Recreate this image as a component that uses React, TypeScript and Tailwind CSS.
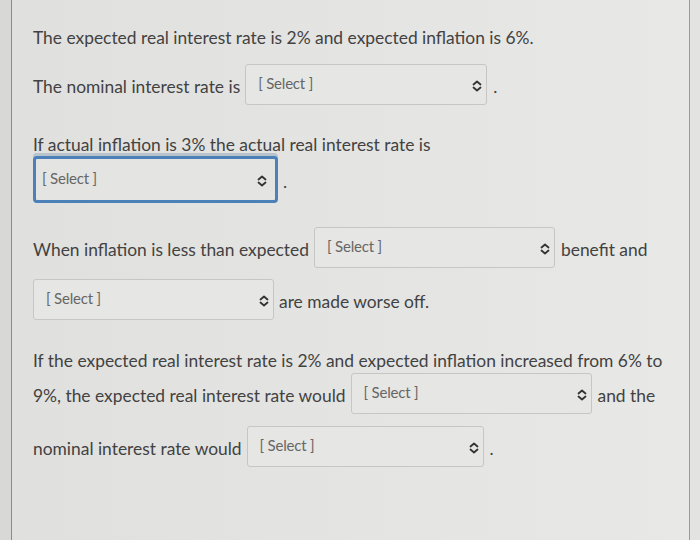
import React from "react";

function Chevron() {
  return (
    <svg width="10" height="12" viewBox="0 0 10 12" fill="none" stroke="#333333" strokeWidth="1.8" strokeLinecap="round" strokeLinejoin="round">
      <polyline points="1.5,4.5 5,1.5 8.5,4.5" />
      <polyline points="1.5,7.5 5,10.5 8.5,7.5" />
    </svg>
  );
}

function Select({ w, focused = false }: { w: string; focused?: boolean }) {
  return (
    <div
      className={
        focused
          ? `${w} h-[47px] shrink-0 rounded-[4px] border-[3px] border-[#4c80b8] bg-[#e4e4e2] flex items-center justify-between pl-[6px] pr-[8px] shadow-[0_-3px_0_0_#b9c3cc]`
          : `${w} h-[41px] shrink-0 rounded-[3px] border border-[#c6c6c4] bg-[#e6e6e4] flex items-center justify-between pl-[12px] pr-[4px]`
      }
    >
      <span className="text-[15px] text-[#666666] -mt-[3px] tracking-[-0.2px]">[ Select ]</span>
      <span className="mt-[3px]"><Chevron /></span>
    </div>
  );
}

export default function App() {
  return (
    <div className="w-[700px] h-[540px] flex bg-[#e3e3e1] font-['Lato',sans-serif] text-[17.4px] text-[#424242] overflow-hidden">
      <div className="w-[12px] h-full bg-[#d8d8d6] border-r border-[#8a8a88]" />
      <div className="w-[678px] h-full border-r border-[#9a9a98] bg-gradient-to-r from-[#e0e0de] to-[#e8e8e6] pl-[21px] flex flex-col">
        <div className="h-[20px]" />
        <div className="h-[36px] flex items-center">The expected real interest rate is 2% and expected inflation is 6%.</div>
        <div className="h-[8px]" />
        <div className="h-[41px] flex items-center">
          <span className="pt-[6px] mr-[5px]">The nominal interest rate is</span>
          <Select w="w-[242px]" />
          <span className="pt-[6px] ml-[6px]">.</span>
        </div>
        <div className="h-[29px]" />
        <div className="h-[22px] flex items-center">
          If actual inflation is 3% the actual real interest rate is
        </div>
        <div className="h-[0px]" />
        <div className="h-[47px] flex items-center">
          <Select w="w-[245px]" focused />
          <span className="pt-[6px] ml-[5px]">.</span>
        </div>
        <div className="h-[24px]" />
        <div className="h-[41px] flex items-center">
          <span className="pt-[6px] mr-[5px]">When inflation is less than expected</span>
          <Select w="w-[241px]" />
          <span className="pt-[6px] ml-[6px]">benefit and</span>
        </div>
        <div className="h-[11px]" />
        <div className="h-[41px] flex items-center">
          <Select w="w-[241px]" />
          <span className="pt-[6px] ml-[5px]">are made worse off.</span>
        </div>
        <div className="h-[29px]" />
        <div className="h-[24px] flex items-center">
          If the expected real interest rate is 2% and expected inflation increased from 6% to
        </div>
        <div className="h-[0px]" />
        <div className="h-[41px] flex items-center">
          <span className="pt-[6px] mr-[5px]">9%, the expected real interest rate would</span>
          <Select w="w-[241px]" />
          <span className="pt-[6px] ml-[6px]">and the</span>
        </div>
        <div className="h-[12px]" />
        <div className="h-[41px] flex items-center">
          <span className="pt-[6px] mr-[5px]">nominal interest rate would</span>
          <Select w="w-[237px]" />
          <span className="pt-[6px] ml-[6px]">.</span>
        </div>
      </div>
    </div>
  );
}
